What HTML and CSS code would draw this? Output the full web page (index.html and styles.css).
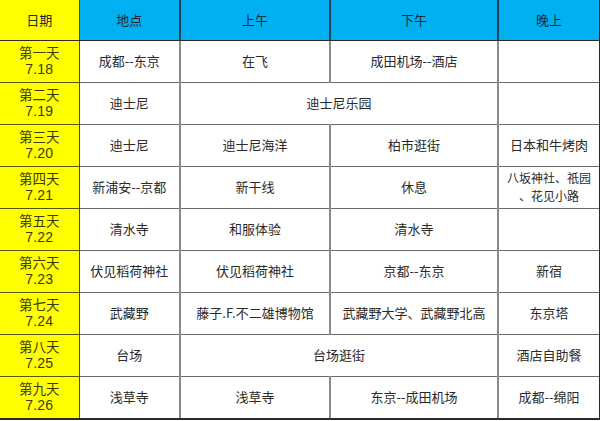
FILE: index.html
```html
<!DOCTYPE html>
<html lang="zh">
<head>
<meta charset="utf-8">
<link rel="stylesheet" href="styles.css">
</head>
<body>
<table class="plan">
  <colgroup>
    <col class="c-date"><col class="c-place"><col class="c-am"><col class="c-pm"><col class="c-eve">
  </colgroup>
  <thead>
    <tr>
      <th class="h-date">日期</th>
      <th>地点</th>
      <th>上午</th>
      <th>下午</th>
      <th>晚上</th>
    </tr>
  </thead>
  <tbody>
    <tr>
      <td class="date"><div class="day">第一天</div><div class="num">7.18</div></td>
      <td>成都--东京</td>
      <td>在飞</td>
      <td>成田机场--酒店</td>
      <td></td>
    </tr>
    <tr>
      <td class="date"><div class="day">第二天</div><div class="num">7.19</div></td>
      <td>迪士尼</td>
      <td colspan="2">迪士尼乐园</td>
      <td></td>
    </tr>
    <tr>
      <td class="date"><div class="day">第三天</div><div class="num">7.20</div></td>
      <td>迪士尼</td>
      <td>迪士尼海洋</td>
      <td>柏市逛街</td>
      <td>日本和牛烤肉</td>
    </tr>
    <tr>
      <td class="date"><div class="day">第四天</div><div class="num">7.21</div></td>
      <td>新浦安--京都</td>
      <td>新干线</td>
      <td>休息</td>
      <td class="tight"><div>八坂神社、祇园</div><div>、花见小路</div></td>
    </tr>
    <tr>
      <td class="date"><div class="day">第五天</div><div class="num">7.22</div></td>
      <td>清水寺</td>
      <td>和服体验</td>
      <td>清水寺</td>
      <td></td>
    </tr>
    <tr>
      <td class="date"><div class="day">第六天</div><div class="num">7.23</div></td>
      <td>伏见稻荷神社</td>
      <td>伏见稻荷神社</td>
      <td>京都--东京</td>
      <td>新宿</td>
    </tr>
    <tr>
      <td class="date"><div class="day">第七天</div><div class="num">7.24</div></td>
      <td>武藏野</td>
      <td>藤子.F.不二雄博物馆</td>
      <td>武藏野大学、武藏野北高</td>
      <td>东京塔</td>
    </tr>
    <tr>
      <td class="date"><div class="day">第八天</div><div class="num">7.25</div></td>
      <td>台场</td>
      <td colspan="2">台场逛街</td>
      <td>酒店自助餐</td>
    </tr>
    <tr>
      <td class="date"><div class="day">第九天</div><div class="num">7.26</div></td>
      <td>浅草寺</td>
      <td>浅草寺</td>
      <td>东京--成田机场</td>
      <td>成都--绵阳</td>
    </tr>
  </tbody>
</table>
</body>
</html>
```

FILE: styles.css
```css
html, body {
  margin: 0;
  padding: 0;
  background: #ffffff;
}

.plan {
  width: 600px;
  border-collapse: collapse;
  table-layout: fixed;
  font-family: "Noto Sans CJK SC", "Noto Sans", sans-serif;
  font-size: 13px;
  color: #2a2a2a;
}

.c-date { width: 79px; }
.c-place { width: 101px; }
.c-am { width: 150px; }
.c-pm { width: 168px; }
.c-eve { width: 102px; }

.plan th {
  height: 40px;
  box-sizing: border-box;
  background: #00b0f0;
  font-weight: normal;
  color: #1e2a30;
  text-align: center;
  vertical-align: middle;
  padding: 0;
  line-height: 16px;
  border-right: 2px solid #1c3f5a;
  border-bottom: 1px solid #2a2a2a;
}

.plan th.h-date {
  background: #ffff00;
  border-right: 1px solid #555500;
}

.plan td {
  height: 41px;
  padding: 0 2px;
  text-align: center;
  vertical-align: middle;
  border-right: 2px solid #8a8a8a;
  border-bottom: 1px solid #6a6a6a;
  line-height: 16px;
  white-space: nowrap;
  overflow: hidden;
}

.plan td.date {
  background: #ffff00;
  color: #3a3a10;
  border-right: 1px solid #555500;
  border-bottom: 1px solid #555500;
  padding: 0;
}

.plan .day {
  height: 17px;
  line-height: 17px;
  font-size: 13.5px;
}

.plan .num {
  height: 17px;
  line-height: 17px;
  font-family: "Liberation Sans", sans-serif;
  font-size: 14px;
  letter-spacing: 0.2px;
}

.plan td.tight {
  padding: 0;
}

.plan td.tight div {
  height: 18px;
  line-height: 18px;
  font-size: 12px;
}

.plan tr > :last-child {
  border-right: 2px solid #2a2a2a;
}

.plan tbody tr:last-child td {
  border-bottom: 2px solid #2a2a2a;
}
```
